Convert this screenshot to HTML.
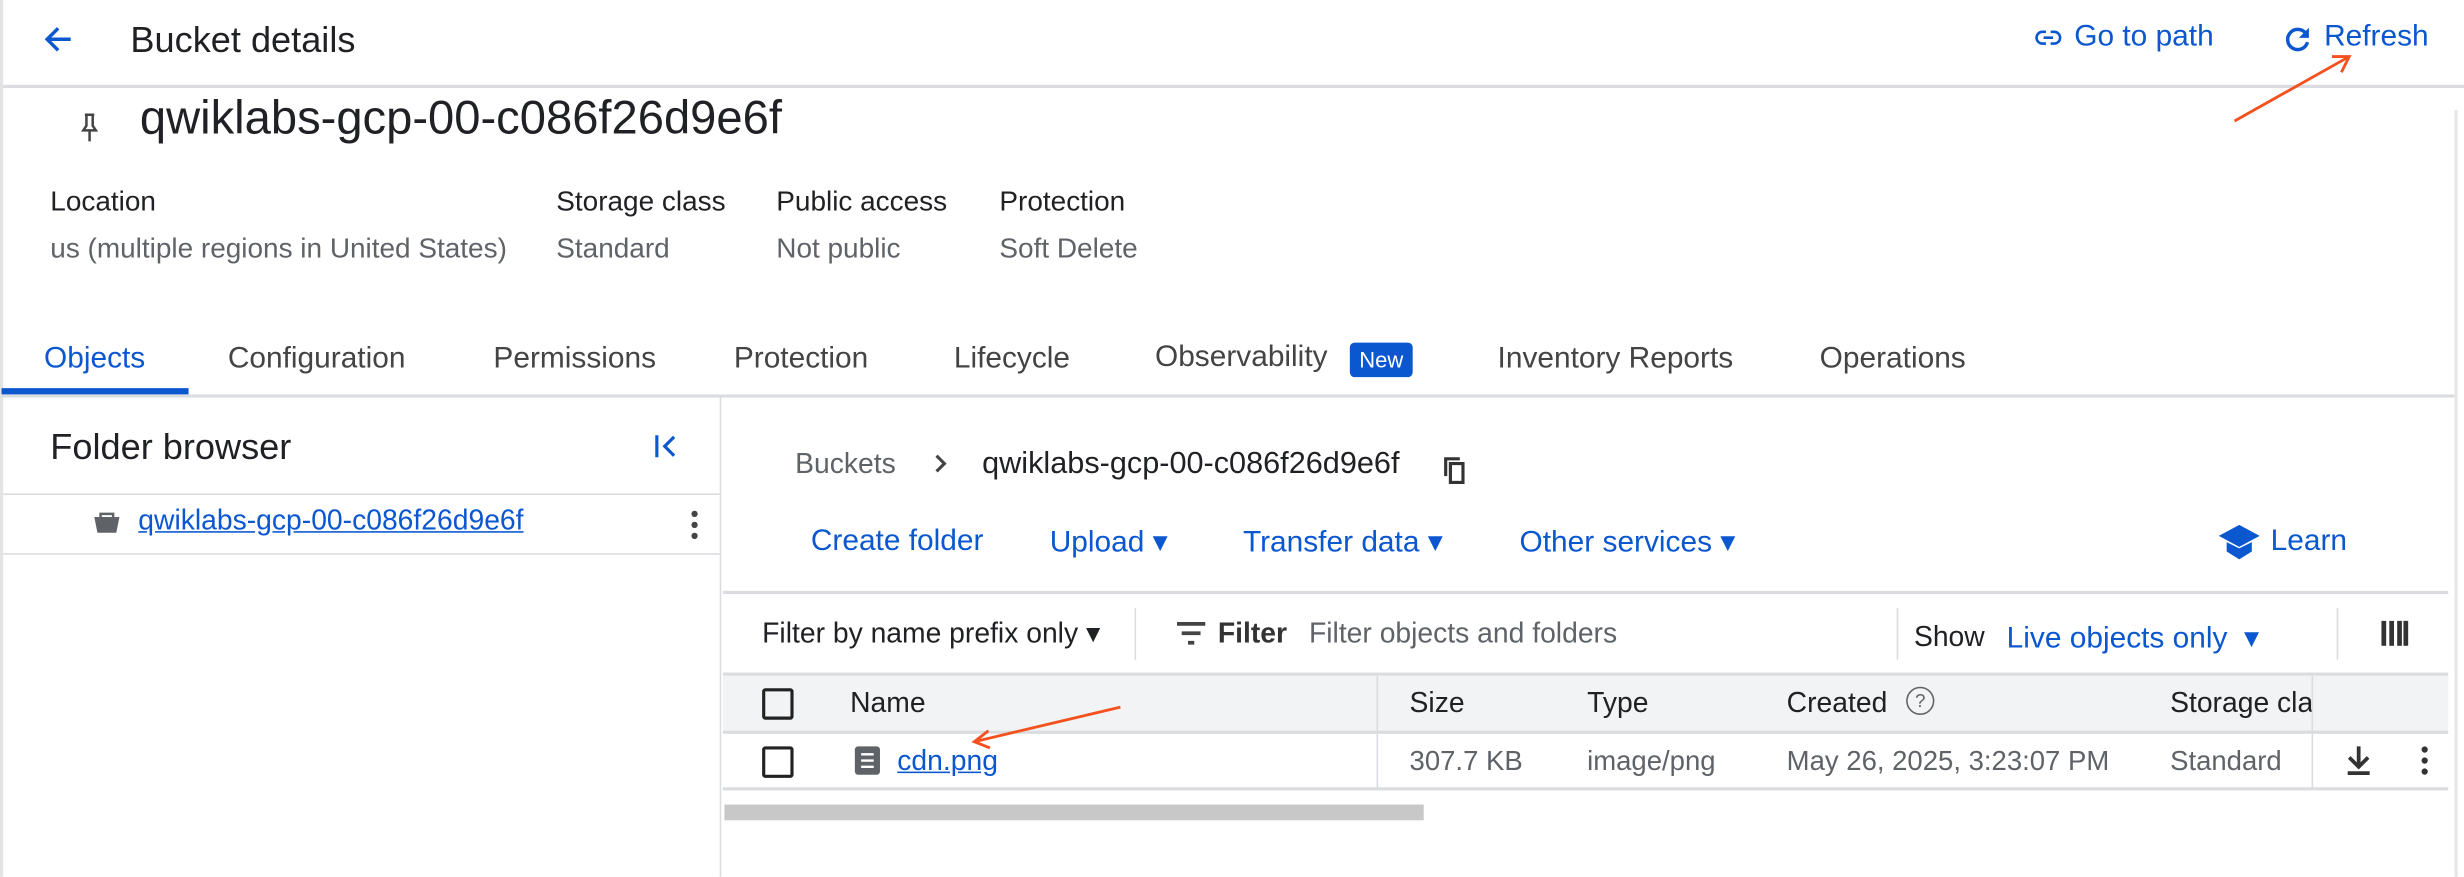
<!DOCTYPE html>
<html><head><meta charset="utf-8"><style>
html,body{margin:0;padding:0;background:#fff;overflow:hidden}
body{width:2464px;height:876px}
#w{position:absolute;left:0;top:0;width:1568px;height:557.5px;transform:scale(1.5714);transform-origin:0 0;font-family:"Liberation Sans",Arial,sans-serif;color:#202124}
.a{position:absolute;white-space:nowrap}
.b{color:#0b57d0}
.g{color:#5f6368}
.hl{position:absolute;background:#dadce0}
</style></head><body><div id="w">
<div class="hl" style="left:0;top:0;width:2px;height:558px;background:#e3e3e3"></div>
<svg class="a" style="left:25px;top:13px" width="24" height="24" viewBox="0 0 24 24"><path d="M20 12H5M12 5l-7 7 7 7" stroke="#0b57d0" stroke-width="2.2" fill="none"/></svg>
<div class="a" style="left:83px;top:12px;font-size:23px">Bucket details</div>
<svg class="a" style="left:1293px;top:15px" width="21" height="18" viewBox="0 0 24 24"><path d="M10 7H7a5 5 0 000 10h3M14 7h3a5 5 0 010 10h-3M8 12h8" stroke="#0b57d0" stroke-width="2.2" fill="none"/></svg>
<div class="a b" style="left:1320px;top:13px;font-size:19px">Go to path</div>
<svg class="a" style="left:1451px;top:14px" width="22" height="22" viewBox="0 0 24 24"><path d="M18.5 9A7 7 0 1 0 19 14" stroke="#0b57d0" stroke-width="2.4" fill="none"/><path d="M20 4v7h-7z" fill="#0b57d0"/></svg>
<div class="a b" style="left:1479px;top:13px;font-size:19px">Refresh</div>
<div class="hl" style="left:2px;top:54px;width:1566px;height:2px"></div>
<div class="hl" style="left:1562px;top:70px;width:2px;height:488px;background:#e6e6e6"></div>
<svg class="a" style="left:49px;top:70px" width="16" height="22" viewBox="0 0 16 22"><path d="M5 3h6M6 3v7l-2 3h8l-2-3V3M8 13v7" stroke="#444" stroke-width="1.6" fill="none"/></svg>
<div class="a" style="left:89px;top:59px;font-size:30px">qwiklabs-gcp-00-c086f26d9e6f</div>
<div style="position:absolute;top:118px;font-size:17.8px">
<span class="a" style="left:32px">Location</span><span class="a" style="left:354px">Storage class</span><span class="a" style="left:494px">Public access</span><span class="a" style="left:636px">Protection</span></div>
<div style="position:absolute;top:148px;font-size:17.8px" class="g">
<span class="a" style="left:32px">us (multiple regions in United States)</span><span class="a" style="left:354px">Standard</span><span class="a" style="left:494px">Not public</span><span class="a" style="left:636px">Soft Delete</span></div>
<div style="position:absolute;top:218px;font-size:19px;color:#444">
<span class="a b" style="left:28px">Objects</span><span class="a" style="left:145px">Configuration</span><span class="a" style="left:314px">Permissions</span><span class="a" style="left:467px">Protection</span><span class="a" style="left:607px">Lifecycle</span><span class="a" style="left:735px;top:-1px">Observability</span><span class="a" style="left:859px;top:0px;background:#0b57d0;color:#fff;font-size:14px;padding:3px 6px;border-radius:3px">New</span><span class="a" style="left:953px">Inventory Reports</span><span class="a" style="left:1158px">Operations</span></div>
<div class="a" style="left:1px;top:247px;width:119px;height:4px;background:#0b57d0"></div>
<div class="hl" style="left:1px;top:251px;width:1561px;height:2px"></div>
<div class="hl" style="left:458px;top:253px;width:1px;height:305px"></div>
<div class="a" style="left:32px;top:271px;font-size:23px">Folder browser</div>
<svg class="a" style="left:414px;top:274px" width="20" height="20" viewBox="0 0 20 20"><path d="M4 3v14M15 4l-6 6 6 6" stroke="#0b57d0" stroke-width="2" fill="none"/></svg>
<div class="hl" style="left:2px;top:314px;width:456px;height:1px"></div>
<div class="hl" style="left:2px;top:352px;width:456px;height:1px"></div>
<svg class="a" style="left:59px;top:323px" width="18" height="18" viewBox="0 0 18 18"><path d="M5 6V4h8v2" stroke="#5f6368" stroke-width="1.6" fill="none"/><path d="M1 6h16l-2 10H3z" fill="#5f6368"/></svg>
<div class="a b" style="left:88px;top:321px;font-size:18px;text-decoration:underline">qwiklabs-gcp-00-c086f26d9e6f</div>
<svg class="a" style="left:438px;top:324px" width="8" height="20"><circle cx="4" cy="3" r="2" fill="#444"/><circle cx="4" cy="10" r="2" fill="#444"/><circle cx="4" cy="17" r="2" fill="#444"/></svg>
<div class="a g" style="left:506px;top:285px;font-size:18px">Buckets</div>
<svg class="a" style="left:592px;top:287px" width="14" height="16"><path d="M4 3l5 5-5 5" stroke="#444" stroke-width="2" fill="none"/></svg>
<div class="a" style="left:625px;top:284px;font-size:19.5px">qwiklabs-gcp-00-c086f26d9e6f</div>
<svg class="a" style="left:917px;top:289px" width="18" height="20" viewBox="0 0 18 20"><path d="M3 14V3h9" stroke="#333" stroke-width="2" fill="none"/><rect x="6" y="6" width="8" height="12" stroke="#333" stroke-width="2" fill="none"/></svg>
<div style="position:absolute;top:334px;font-size:19px" class="b">
<span class="a" style="left:516px">Create folder</span><span class="a" style="left:668px">Upload ▾</span><span class="a" style="left:791px">Transfer data ▾</span><span class="a" style="left:967px">Other services ▾</span><span class="a" style="left:1445px">Learn</span></div>
<svg class="a" style="left:1411px;top:332px" width="28" height="26" viewBox="0 0 28 26"><path d="M14 2L1 9l13 7 13-7z" fill="#0b57d0"/><path d="M6 13v6l8 5 8-5v-6l-8 4z" fill="#0b57d0"/></svg>
<div class="hl" style="left:460px;top:376px;width:1098px;height:2px"></div>
<div class="a" style="left:485px;top:393px;font-size:18px">Filter by name prefix only ▾</div>
<div class="hl" style="left:722px;top:387px;width:1px;height:33px"></div>
<svg class="a" style="left:748px;top:395px" width="20" height="16"><path d="M1 2h18M4 8h12M8 14h4" stroke="#444" stroke-width="2.4"/></svg>
<div class="a" style="left:775px;top:393px;font-size:18px;font-weight:bold;color:#333">Filter</div>
<div class="a g" style="left:833px;top:393px;font-size:18px">Filter objects and folders</div>
<div class="hl" style="left:1207px;top:387px;width:1px;height:33px"></div>
<div class="a" style="left:1218px;top:395px;font-size:18px">Show</div>
<div class="a b" style="left:1277px;top:395px;font-size:19px">Live objects only &nbsp;▾</div>
<div class="hl" style="left:1487px;top:387px;width:1px;height:33px"></div>
<svg class="a" style="left:1515px;top:395px" width="18" height="16"><path d="M2 0v16M7 0v16M12 0v16M16 0v16" stroke="#333" stroke-width="3"/></svg>
<div class="a" style="left:460px;top:430px;width:1098px;height:36px;background:#f1f3f4"></div>
<div class="hl" style="left:460px;top:428px;width:1098px;height:2px"></div>
<div class="hl" style="left:460px;top:465px;width:1098px;height:2px"></div>
<div class="hl" style="left:460px;top:501px;width:1098px;height:2px"></div>
<div class="hl" style="left:876px;top:430px;width:1px;height:72px"></div>
<div class="hl" style="left:1471px;top:430px;width:1px;height:72px"></div>
<div class="a" style="left:485px;top:438px;width:16px;height:16px;border:2px solid #222;border-radius:2px"></div>
<div class="a" style="left:485px;top:475px;width:16px;height:16px;border:2px solid #222;border-radius:2px"></div>
<div style="position:absolute;top:437px;font-size:18px;color:#202124">
<span class="a" style="left:541px">Name</span><span class="a" style="left:897px">Size</span><span class="a" style="left:1010px">Type</span><span class="a" style="left:1137px">Created</span><span class="a" style="left:1381px;width:90px;overflow:hidden">Storage class</span></div>
<div class="a g" style="left:1213px;top:437px;width:16px;height:16px;border:1.6px solid #5f6368;border-radius:50%;font-size:12px;text-align:center;line-height:16px">?</div>
<svg class="a" style="left:543px;top:474px" width="18" height="20"><rect x="1" y="1" width="16" height="18" rx="2" fill="#5f6368"/><path d="M5 6h8M5 10h8M5 14h8" stroke="#fff" stroke-width="1.5"/></svg>
<div class="a b" style="left:571px;top:474px;font-size:18px;text-decoration:underline">cdn.png</div>
<div style="position:absolute;top:474px;font-size:17.5px" class="g">
<span class="a" style="left:897px">307.7 KB</span><span class="a" style="left:1010px">image/png</span><span class="a" style="left:1137px">May 26, 2025, 3:23:07 PM</span><span class="a" style="left:1381px">Standard</span></div>
<svg class="a" style="left:1492px;top:474px" width="18" height="20"><path d="M9 1v12M3 8l6 6 6-6M2 18h14" stroke="#333" stroke-width="2.4" fill="none"/></svg>
<svg class="a" style="left:1539px;top:474px" width="8" height="20"><circle cx="4" cy="3" r="2" fill="#333"/><circle cx="4" cy="10" r="2" fill="#333"/><circle cx="4" cy="17" r="2" fill="#333"/></svg>
<div class="a" style="left:461px;top:512px;width:445px;height:10px;background:#c8c8c8"></div>
<svg class="a" style="left:0;top:0" width="1568" height="558"><g stroke="#f4511e" stroke-width="1.8" fill="none"><path d="M1422 77L1495 36M1484 36h11l-5 10"/><path d="M713 450L620 472M629 465l-9 7 10 4"/></g></svg>
</div></body></html>
